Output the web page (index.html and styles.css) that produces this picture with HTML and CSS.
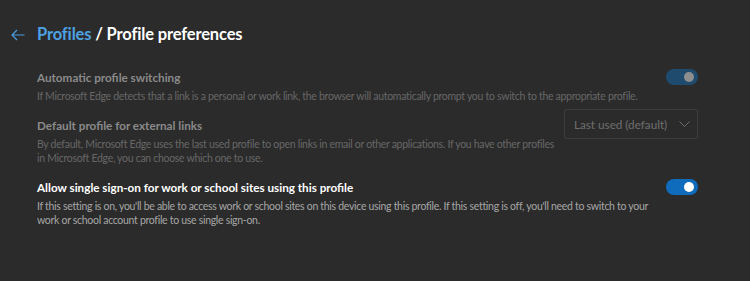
FILE: index.html
```html
<!DOCTYPE html>
<html>
<head>
<meta charset="utf-8">
<link rel="stylesheet" href="styles.css">
</head>
<body>
<div class="page">
  <header class="header">
    <svg class="back" width="14" height="12" viewBox="0 0 14 12"><path d="M13.5 6H1.2M6 1L1 6l5 5" fill="none" stroke="#4a9de0" stroke-width="1.2"/></svg>
    <h1 class="title"><span class="crumb">Profiles</span> / Profile preferences</h1>
  </header>
  <section class="settings">
    <div class="setting disabled">
      <div class="label">Automatic profile switching</div>
      <div class="toggle dim"><span class="knob"></span></div>
      <div class="desc full">If Microsoft Edge detects that a link is a personal or work link, the browser will automatically prompt you to switch to the appropriate profile.</div>
    </div>
    <div class="setting disabled select-row">
      <div class="label">Default profile for external links</div>
      <div class="select"><span>Last used (default)</span><svg width="11" height="6" viewBox="0 0 11 6"><path d="M0.5 0.5l5 5 5-5" fill="none" stroke="#6e6e6e" stroke-width="1"/></svg></div>
      <div class="desc narrow">By default, Microsoft Edge uses the last used profile to open links in email or other applications. If you have other profiles in Microsoft Edge, you can choose which one to use.</div>
    </div>
    <div class="setting">
      <div class="label">Allow single sign-on for work or school sites using this profile</div>
      <div class="toggle on"><span class="knob"></span></div>
      <div class="desc full">If this setting is on, you'll be able to access work or school sites on this device using this profile. If this setting is off, you'll need to switch to your work or school account profile to use single sign-on.</div>
    </div>
  </section>
</div>
</body>
</html>
```
FILE: styles.css
```css
html, body {
  margin: 0;
  padding: 0;
  background: #2b2b2b;
}
body {
  font-family: Lato, "Open Sans", sans-serif;
  width: 750px;
  height: 281px;
  overflow: hidden;
}
.page {
  padding: 20px 52px 0 11px;
}
.header {
  display: flex;
  align-items: center;
  gap: 12px;
  height: 28px;
}
.back {
  display: block;
  margin-top: 1px;
}
.title {
  margin: 0;
  font-size: 16.5px;
  font-weight: 700;
  color: #ffffff;
  letter-spacing: -0.15px;
}
.crumb {
  color: #4ea1e3;
}
.settings {
  padding-left: 26px;
  padding-top: 20px;
  display: flex;
  flex-direction: column;
  gap: 13px;
}
.setting {
  display: grid;
  grid-template-columns: 1fr auto;
  align-items: center;
}
.label {
  font-size: 11.7px;
  font-weight: 700;
  color: #ffffff;
  line-height: 18px;
}
.desc {
  grid-column: 1 / 3;
  font-size: 10.5px;
  letter-spacing: -0.3px;
  line-height: 14px;
  color: #a6a6a6;
  margin-top: 3px;
}
.desc.full {
  max-width: 630px;
}
.disabled .label {
  color: #8a8a8a;
}
.disabled .desc {
  color: #676767;
}
.select-row .desc {
  grid-column: 1;
  max-width: 520px;
}
.select-row .select {
  grid-column: 2;
  grid-row: 1 / 3;
  align-self: start;
  margin-top: -7px;
}
.toggle {
  width: 32px;
  height: 16px;
  border-radius: 8px;
  box-sizing: border-box;
  display: flex;
  align-items: center;
  justify-content: flex-end;
  padding-right: 4px;
}
.toggle .knob {
  width: 10px;
  height: 10px;
  border-radius: 50%;
  background: #ffffff;
}
.toggle.on {
  background: #0f6cbd;
}
.toggle.dim {
  background: #1f4b6f;
}
.toggle.dim .knob {
  background: #8e8e8e;
}
.select {
  width: 134px;
  height: 30px;
  box-sizing: border-box;
  border: 1px solid #3d3d3d;
  border-radius: 2px;
  display: flex;
  align-items: center;
  gap: 12px;
  padding: 0 0 0 9px;
  font-size: 11.7px;
  color: #6f6f6f;
  white-space: nowrap;
}
```
